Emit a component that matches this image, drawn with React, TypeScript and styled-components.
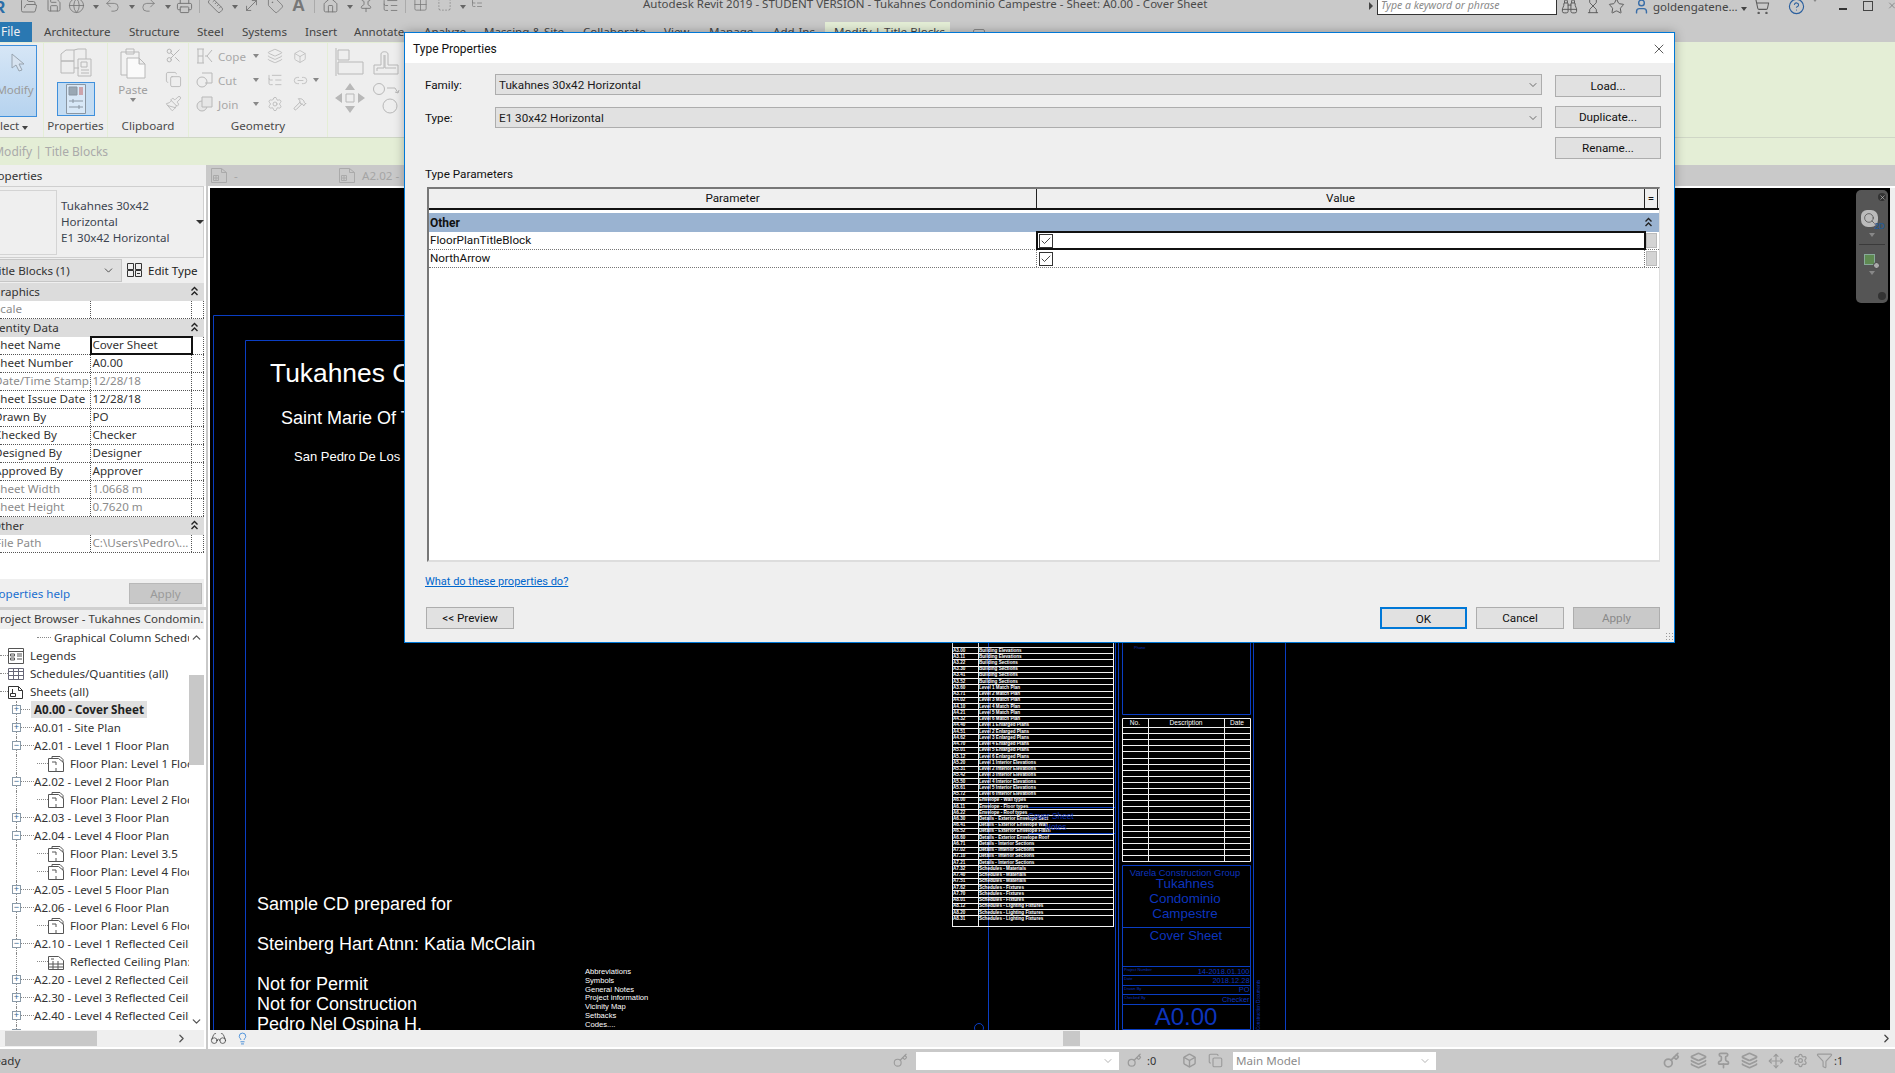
import React from "react";
import styled, { createGlobalStyle } from "styled-components";
import {
  FolderOpen, Save, Globe, Undo2, Redo2, Printer, Ruler, MoveDiagonal, Tag, House, Pin, ListTree,
  Binoculars, Hourglass, Star, User, ShoppingCart, CircleHelp, X, Check, ChevronDown, ChevronUp,
  ChevronLeft, ChevronRight, Grid2x2, SquareDashed, Filter, Lightbulb, Glasses, Scissors, Copy,
  Paintbrush, Hammer, Key, Layers, Link2, Box, Settings, Move, Search,
} from "lucide-react";

const UI = '"Noto Sans", "Liberation Sans", sans-serif';
const DLG = 'Roboto, "Liberation Sans", sans-serif';

const Global = createGlobalStyle`
  html, body { margin: 0; padding: 0; background: #c9c9c9; }
  * { box-sizing: border-box; }
`;

const Page = styled.div`
  position: relative; width: 1895px; height: 1073px; overflow: hidden;
  display: flex; flex-direction: column; font-family: ${UI}; font-size: 11.5px; color: #333; background: #c9c9c9;
`;

/* ---------- top bar ---------- */
const TopBar = styled.div`
  height: 21px; flex: none; display: flex; align-items: flex-start; overflow: hidden; background: #c9c9c9; color: #777;
`;
const Logo = styled.div`
  width: 20px; height: 14px; flex: none; margin-top: -2px; margin-left: -7px;
  font: bold 17px "Liberation Sans", sans-serif; color: #2b6ea8;
`;
const QuickSlot = styled.div<{ $w: number }>`
  width: ${(p) => p.$w}px; flex: none; height: 16px; margin-top: -3px; display: flex; justify-content: flex-start;
`;
const QuickCaret = styled.span`
  width: 0; height: 0; margin: 8px 0 0 0; border: 3.5px solid transparent; border-top: 4px solid #666; border-bottom: 0;
`;
const QuickSep = styled.span`
  width: 1px; height: 16px; background: #aaa; margin-left: 0;
`;
const BigA = styled.span`
  font: bold 18px "Liberation Sans", sans-serif; color: #777; line-height: 16px;
`;
const Title = styled.div`
  margin-left: 160px; margin-top: -4px; width: 726px; flex: none; white-space: nowrap; font-size: 11.5px; line-height: 16px; color: #4a4a4a;
`;
const SearchArrow = styled.span`
  width: 0; height: 0; flex: none; margin-top: 2px; border: 4px solid transparent; border-left: 4px solid #444; border-right: 0; margin-right: 4px;
`;
const SearchBox = styled.div`
  width: 180px; height: 15px; flex: none; background: #fff; border: 1px solid #333; border-top: 0; padding-left: 3px;
  font-style: italic; font-size: 10.5px; line-height: 11px; color: #8a8a8a;
`;
const TopIcons = styled.div`
  display: flex; align-items: flex-start; margin-left: 4px; color: #5a5a5a; height: 16px;
`;
const TopSlot = styled.div<{ $w: number }>`
  width: ${(p) => p.$w}px; flex: none; height: 16px; margin-top: -2px; display: flex; color: inherit;
`;
const UserName = styled.div`
  width: 100px; flex: none; font-size: 11.5px; line-height: 13px; color: #444; white-space: nowrap;
`;
const WinDash = styled.span`
  width: 8px; height: 2px; margin-top: 10px; background: #333;
`;
const WinRestore = styled.span`
  width: 10px; height: 10px; margin-top: 3px; border: 1.5px solid #444;
`;

/* ---------- tabs ---------- */
const TabRow = styled.div`
  height: 21px; flex: none; display: flex; align-items: stretch; background: #c9c9c9; padding-top: 1px;
`;
const FileTab = styled.div`
  width: 32px; margin-right: 12px; background: #2a78b2; color: #f2f2f2; font-size: 12px; line-height: 19px; padding-left: 1px;
`;
const Tab = styled.div<{ $w: number; $active?: boolean }>`
  width: ${(p) => p.$w}px; flex: none; white-space: nowrap; font-size: 11.6px; line-height: 19px; color: #444;
  background: ${(p) => (p.$active ? "#e4eed6" : "transparent")};
  padding-left: ${(p) => (p.$active ? "9px" : "0")};
`;
const TabGap = styled.div`
  width: 23px; flex: none;
`;
const TabButton = styled.div`
  width: 12px; height: 8px; margin-top: 7px; border: 1px solid #888; border-radius: 2px;
`;

/* ---------- ribbon ---------- */
const Ribbon = styled.div`
  height: 96px; flex: none; display: flex; background: #e4eed6; border-bottom: 1px solid #cfd6c6; padding-top: 1px;
`;
const RibbonPanel = styled.div<{ $w: number }>`
  width: ${(p) => p.$w}px; flex: none; margin-right: 1px; background: #eeeeee; display: flex; flex-direction: column; overflow: hidden;
`;
const PanelBody = styled.div`
  flex: 1; display: flex; min-height: 0;
`;
const PanelLabel = styled.div<{ $left?: boolean }>`
  height: 21px; flex: none; text-align: ${(p) => (p.$left ? "left" : "center")}; font-size: 11.6px; line-height: 20px; color: #4a4a4a; white-space: nowrap;
`;
const ModifyButton = styled.div`
  width: 38px; height: 72px; margin-top: 2px; margin-left: -1px; padding-top: 7px; background: linear-gradient(#d6e6f6, #b6d3ef); border: 1px solid #3f90dc;
  display: flex; flex-direction: column; align-items: center; color: #aab;
`;
const ModifyText = styled.span`
  font-size: 11.5px; line-height: 16px; color: #9a9a9a; margin-top: 9px; margin-left: -6px;
`;
const Stack = styled.div<{ $w?: number; $pt?: number }>`
  display: flex; flex-direction: column; align-items: center; width: ${(p) => (p.$w ? p.$w + "px" : "100%")}; padding-top: ${(p) => p.$pt ?? 0}px; color: #b5b5b5; flex: none;
`;
const PropButton = styled.div`
  width: 38px; height: 34px; margin-top: 4px; background: #c4dcf2; border: 1px solid #3f90dc; display: flex; align-items: center; justify-content: center;
`;
const PasteText = styled.span`
  font-size: 11.5px; line-height: 16px; color: #a0a0a0; margin-top: 3px;
`;
const MiniCaret = styled.span<{ $dark?: boolean }>`
  display: inline-block; width: 0; height: 0; border: 3px solid transparent; border-top: 4px solid ${(p) => (p.$dark ? "#444" : "#888")}; border-bottom: 0; flex: none;
`;
const ToolRow = styled.div`
  display: flex; align-items: center; height: 24px; color: #b5b5b5; font-size: 12px;
`;
const ToolName = styled.span`
  color: #a8a8a8; width: 35px; margin-left: 5px; font-size: 11.6px;
`;
const ToolColumn = styled.div<{ $ml: number; $w?: number; $pt?: number; $gap?: number }>`
  margin-left: ${(p) => p.$ml}px; ${(p) => (p.$w ? `width:${p.$w}px;` : "")} padding-top: ${(p) => p.$pt ?? 1}px; flex: none;
  display: flex; flex-direction: column; gap: ${(p) => p.$gap ?? 0}px;
`;
const IconCell = styled.span<{ $w: number }>`
  width: ${(p) => p.$w}px; flex: none; display: flex; align-items: center;
`;
const ContextBar = styled.div`
  height: 27px; flex: none; background: #e4eed6; padding-left: 0; font-size: 12px; line-height: 27px; color: #aaa; white-space: nowrap; overflow: hidden;
`;
const ContextText = styled.span`
  margin-left: -13px; display: inline-block;
`;

/* ---------- workspace ---------- */
const Workspace = styled.div`
  flex: 1; display: flex; min-height: 0;
`;
const Side = styled.div`
  width: 206px; flex: none; display: flex; flex-direction: column; background: #fff; overflow: hidden;
`;
const PanelHead = styled.div`
  height: 21px; flex: none; background: #efefef; font-size: 11.6px; line-height: 22px; white-space: nowrap; overflow: hidden;
`;
const Shift = styled.span<{ $x: number }>`
  display: inline-block; margin-left: -${(p) => p.$x}px; white-space: nowrap;
`;
const TypeSelector = styled.div`
  height: 72px; flex: none; width: 204px; background: #efefef; border: 1px solid #cfcfcf; border-left: 0; display: flex; align-items: center; position: relative;
`;
const Thumb = styled.div`
  width: 57px; height: 65px; flex: none; border: 1px solid #d4d4d4; border-left: 0;
`;
const TypeText = styled.div`
  margin-left: 4px; font-size: 11.6px; line-height: 16px; color: #3c4450; white-space: nowrap;
`;
const TypeArrow = styled.span`
  margin-left: 27px; width: 0; height: 0; border: 4px solid transparent; border-top: 4px solid #333; border-bottom: 0;
`;
const FilterRow = styled.div`
  height: 25px; flex: none; background: #efefef; display: flex; align-items: stretch; padding-top: 1px; padding-bottom: 1px; width: 204px;
`;
const FilterSelect = styled.div`
  width: 122px; flex: none; background: #dfdfdf; border: 1px solid #c6c6c6; border-left: 0; display: flex; align-items: center; font-size: 11.6px; white-space: nowrap; overflow: hidden; justify-content: space-between; padding-right: 6px; padding-bottom: 1px;
`;
const EditType = styled.div`
  display: flex; align-items: center; margin-left: 5px; gap: 5px; font-size: 11.6px; color: #222; white-space: nowrap; padding-bottom: 1px;
`;
const SectionHead = styled.div`
  height: 18px; flex: none; width: 204px; background: #dcdcdc; display: flex; align-items: center; justify-content: space-between; padding: 0 5px 2px 0; font-size: 11.6px; color: #333; white-space: nowrap; overflow: hidden;
`;
const PropGrid = styled.div`
  display: grid; grid-template-columns: 90.5px 101px 12px; height: 18px; flex: none; width: 204px; border-bottom: 1px dotted #555; font-size: 11.6px; line-height: 15px;
`;
const PropLabel = styled.div<{ $muted?: boolean }>`
  overflow: hidden; white-space: nowrap; color: ${(p) => (p.$muted ? "#8b8b8b" : "#333")}; border-right: 1px dotted #555;
`;
const PropValue = styled.div<{ $muted?: boolean; $sel?: boolean }>`
  overflow: hidden; white-space: nowrap; padding-left: 2px; color: ${(p) => (p.$muted ? "#8b8b8b" : "#333")}; border-right: 1px dotted #555;
  ${(p) => p.$sel && "outline: 2px solid #111; outline-offset: -1px;"}
`;
const PropEnd = styled.div`
  border-right: 1px dotted #555;
`;
const PropFill = styled.div`
  height: 26px; flex: none;
`;
const HelpRow = styled.div`
  height: 28px; flex: none; background: #efefef; width: 204px; display: flex; justify-content: space-between; align-items: center; padding-right: 2px; overflow: hidden;
`;
const HelpLink = styled.a`
  color: #1a6fd0; text-decoration: underline; font-size: 11.6px; white-space: nowrap;
`;
const DisabledBtn = styled.div`
  width: 73px; height: 21px; background: #c8c8c8; border: 1px solid #b8b8b8; text-align: center; font-size: 11.6px; line-height: 20px; color: #9a9a9a;
`;
const PanelDivider = styled.div`
  height: 3px; flex: none; background: #cfcfcf;
`;
const BrowserHead = styled.div`
  height: 19px; flex: none; background: #efefef; font-size: 11.6px; line-height: 18px; color: #3c3c3c; white-space: nowrap; overflow: hidden; width: 204px;
`;
const TreeArea = styled.div`
  height: 401px; flex: none; display: flex; width: 204px; overflow: hidden;
`;
const Tree = styled.div`
  width: 189px; flex: none; overflow: hidden;
`;
const TreeRow = styled.div<{ $indent: number; $guide?: boolean }>`
  position: relative; height: 18px; display: flex; align-items: center; padding-left: ${(p) => p.$indent}px; padding-bottom: 1px; white-space: nowrap; font-size: 11.6px; color: #333;
  ${(p) => p.$guide && "&::before { content: ''; position: absolute; left: 16px; top: 0; bottom: 0; border-left: 1px dotted #888; }"}
`;
const Expander = styled.span`
  position: relative; z-index: 1; width: 9px; height: 9px; flex: none; background: #fff; border: 1px solid #8a9aa8; display: flex; align-items: center; justify-content: center; font: 9px/7px "Liberation Sans", sans-serif; color: #35678f;
`;
const Dots = styled.span<{ $w: number }>`
  width: ${(p) => p.$w}px; flex: none; border-top: 1px dotted #888; height: 0;
`;
const RowLabel = styled.span<{ $sel?: boolean }>`
  ${(p) => p.$sel && "font-weight: 700; background: #e0e0e0; padding: 1px 3px; margin-left: -3px; color: #222;"}
  flex: none;
`;
const TreeIcon = styled.svg`
  flex: none; margin-right: 6px;
`;
const VScroll = styled.div`
  width: 15px; flex: none; display: flex; flex-direction: column; align-items: center; justify-content: space-between; position: relative; color: #555; padding: 2px 0;
`;
const VThumb = styled.div`
  position: absolute; left: 0; right: 0; top: 46px; height: 90px; background: #c8c8c8;
`;
const HScroll = styled.div`
  height: 17px; flex: none; width: 204px; background: #efefef; display: flex; align-items: center; justify-content: space-between; padding: 0 16px 0 5px; color: #555;
`;
const HThumb = styled.div`
  width: 92px; height: 15px; background: #c8c8c8;
`;

/* ---------- main view ---------- */
const Main = styled.div`
  flex: 1; display: flex; flex-direction: column; min-width: 0; position: relative; padding-left: 2px;
`;
const DocTabs = styled.div`
  height: 21px; flex: none; display: flex; align-items: center; padding-left: 5px; color: #aaa; margin-left: -2px; background: #c9c9c9;
`;
const DocTab = styled.div<{ $w: number }>`
  width: ${(p) => p.$w}px; display: flex; align-items: center; gap: 7px; flex: none; font-size: 11.6px; color: #a5a5a5;
`;
const ViewOuter = styled.div`
  flex: 1; min-height: 0; background: #fff; padding: 2px 0 2px 2px; display: flex; flex-direction: column;
`;
const ViewRow = styled.div`
  height: 842px; flex: none; display: flex; background: #efefef;
`;
const Canvas = styled.svg`
  display: block; width: 1680px; height: 842px; flex: none; background: #000;
`;
const NavWheelBar = styled.div`
  position: absolute; left: 1650px; top: 25px; width: 32px; height: 113px; background: #555; border-radius: 5px; display: flex; flex-direction: column; align-items: center;
`;
const NavClose = styled.span`
  align-self: flex-end; margin: 3px 2px 0 0; width: 8px; height: 8px; border-radius: 50%; background: #333; color: #ccc; display: flex; align-items: center; justify-content: center;
`;
const NavWheel = styled.div`
  position: relative; margin: 9px 5px 0 0; width: 17px; height: 17px; border-radius: 6px 7px 7px 7px; background: #bbb; display: flex; align-items: center; justify-content: center; color: #444;
`;
const Nav2D = styled.span`
  position: absolute; right: -7px; bottom: -4px; font: bold 8.5px "Liberation Sans", sans-serif; color: #2a5a8e;
`;
const NavSep = styled.div`
  width: 26px; height: 1px; background: #3a3a3a; margin-top: 2px;
`;
const NavCaretBox = styled.div`
  height: 15px; display: flex; align-items: center;
`;
const NavSquare = styled.div`
  position: relative; margin: 9px 5px 0 0; width: 11px; height: 11px; background: #5f8a52; border: 1px solid #8a9;
`;
const NavLens = styled.span`
  position: absolute; right: -6px; bottom: -5px; width: 7px; height: 7px; border-radius: 50%; background: #aaa; border: 1px solid #444;
`;
const NavMenu = styled.div`
  margin-top: auto; margin-bottom: 3px; align-self: flex-end; margin-right: 2px; width: 8px; height: 8px; border-radius: 50%; background: #333;
`;
const ViewBar = styled.div`
  height: 17px; flex: none; background: #efefef; display: flex; align-items: center; color: #445;
`;
const ViewIcon = styled.span<{ $w: number; $c?: string }>`
  width: ${(p) => p.$w}px; flex: none; display: flex; align-items: center; color: ${(p) => p.$c || "#444"};
`;
const ViewThumb = styled.div`
  width: 17px; height: 15px; background: #c8c8c8; margin-left: 809px; flex: none;
`;
const ViewEnd = styled.span`
  margin-left: auto; margin-right: 2px; display: flex; color: #444;
`;

/* ---------- status bar ---------- */
const Status = styled.div`
  height: 24px; flex: none; display: flex; align-items: center; background: #c9c9c9; color: #9b9b9b; padding-bottom: 1px;
`;
const Ready = styled.div`
  width: 893px; flex: none; font-size: 11.6px; color: #333; white-space: nowrap;
`;
const StatusSelect = styled.div<{ $w: number }>`
  width: ${(p) => p.$w}px; height: 18px; flex: none; background: #fff; display: flex; align-items: center; justify-content: space-between; padding: 0 5px 0 3px; font-size: 11.6px; color: #8b8b8b; white-space: nowrap;
`;
const StatusSlot = styled.span<{ $w: number }>`
  width: ${(p) => p.$w}px; flex: none; display: flex; align-items: center; color: #9b9b9b; font-size: 11px;
`;
const StatusText = styled.span`
  color: #333; font-size: 11px;
`;

/* ---------- dialog ---------- */
const Dialog = styled.div`
  position: absolute; left: 404px; top: 32px; width: 1271px; height: 611px; background: #efefef; border: 1px solid #0078d7; box-shadow: 0 0 10px rgba(0,0,0,.28);
  display: flex; flex-direction: column; color: #111; font-family: ${DLG}; font-size: 11.7px;
`;
const DialogTitle = styled.div`
  height: 30px; flex: none; background: #fff; display: flex; align-items: center; justify-content: space-between; padding: 1px 7px 0 8px; font-size: 12px; color: #111;
`;
const DialogBody = styled.div`
  flex: 1; display: flex; flex-direction: column; padding: 11px 14px 0 22px;
`;
const FormTop = styled.div`
  height: 95px; flex: none; display: flex;
`;
const FormCol = styled.div`
  width: 1117px; flex: none; display: flex; flex-direction: column; gap: 12px; margin-left: -2px;
`;
const FormRow = styled.div`
  display: flex; align-items: center; height: 21px;
`;
const FormLabel = styled.div`
  width: 70px; flex: none; padding-left: 0;
`;
const ComboBox = styled.div`
  flex: 1; height: 21px; background: #e1e1e1; border: 1px solid #adadad; border-width: 1px 1.5px 1.5px 1px; display: flex; align-items: center; justify-content: space-between; padding: 0 2px 0 3px; color: #1b1b1b;
`;
const ButtonCol = styled.div`
  width: 106px; flex: none; margin-left: 13px; margin-top: 1px; display: flex; flex-direction: column; gap: 9px;
`;
const DlgButton = styled.div<{ $kind?: "ok" | "off"; $w?: number }>`
  height: 22px; flex: none; width: ${(p) => (p.$w ? p.$w + "px" : "100%")}; text-align: center; line-height: 20px;
  background: ${(p) => (p.$kind === "off" ? "#c9c9c9" : "#e1e1e1")};
  border: ${(p) => (p.$kind === "ok" ? "2px solid #0078d7" : "1px solid #adadad")};
  color: ${(p) => (p.$kind === "off" ? "#8a8a8a" : "#111")};
`;
const SectionLabel = styled.div`
  margin-top: -2px; height: 15px; line-height: 14px; margin-left: -2px;
`;
const Grid = styled.div`
  margin-top: 5px; margin-left: 0; width: 1233px; height: 375px; flex: none; background: #fff; border-top: 2px solid #777; border-left: 2px solid #777; border-right: 1px solid #ddd; border-bottom: 2px solid #ddd; display: flex; flex-direction: column;
`;
const GridHead = styled.div`
  height: 21px; flex: none; display: grid; grid-template-columns: 608px 608px 13px; background: #efefef; border-bottom: 2px solid #111; text-align: center; line-height: 18px;
`;
const HeadCell = styled.div`
  border-right: 1px solid #222;
`;
const GridGap = styled.div`
  height: 3px; flex: none; background: #fff;
`;
const GroupRow = styled.div`
  height: 19px; flex: none; width: 1230px; background: #9ab3d1; display: flex; align-items: center; justify-content: space-between; padding: 0 6px 0 1px; font-weight: 700; font-size: 12px; color: #111;
`;
const DataRow = styled.div`
  height: 18px; flex: none; display: grid; grid-template-columns: 608px 608px 13px; width: 1230px; border-bottom: 1px dotted #777;
`;
const DataName = styled.div`
  padding-left: 1px; line-height: 16px; border-right: 1px dotted #777;
`;
const DataValue = styled.div<{ $sel?: boolean }>`
  ${(p) => (p.$sel ? "outline: 2px solid #111; outline-offset: -1px;" : "border-right: 1px dotted #777;")}
  padding: 2px 0 0 2px; display: flex;
`;
const CheckBox = styled.span`
  width: 14px; height: 14px; border: 1.5px solid #333; background: #fff; display: flex; align-items: center; justify-content: center; color: #333;
`;
const Grip = styled.div`
  margin: 1px; background: #d4d4d4; border: 1px solid #bbb;
`;
const HelpAnchor = styled.a`
  margin-top: 13px; height: 14px; line-height: 14px; margin-left: -2px; color: #0066cc; text-decoration: underline; font-size: 11px; align-self: flex-start;
`;
const Footer = styled.div`
  margin-top: 18px; margin-left: -1px; display: flex; align-items: center; width: 1235px;
`;
const FooterRight = styled.div`
  margin-left: auto; display: flex; gap: 9px; margin-right: 1px;
`;
const ResizeGrip = styled.span`
  position: absolute; right: 1px; bottom: 1px; width: 8px; height: 9px; background-image: radial-gradient(#999 1px, transparent 1px); background-size: 3px 3px;
`;

/* ---------- small drawings ---------- */
const Sheet = ({ s = 16 }: { s?: number }) => (
  <TreeIcon width={s} height={s} viewBox="0 0 16 16" fill="none" stroke="currentColor">
    <path d="M.5 2.5h10l4 4v8H.5zM10.5 2.5v4h4M2.5 9.5h5v3h-5zM4.5 5v4.5" />
  </TreeIcon>
);
const Plan = () => (
  <TreeIcon width={16} height={16} viewBox="0 0 16 16" fill="none" stroke="#555">
    <path d="M.5 2.5h10l5 4v9H.5zM4 2.5v-2h8l3 3v3M4 6h4v3M8 12v3" />
  </TreeIcon>
);
const Rcp = () => (
  <TreeIcon width={16} height={16} viewBox="0 0 16 16" fill="none" stroke="#555">
    <path d="M.5 2.5h10l5 4v9H.5zM5 7v8M10 7v8M.5 10h15M.5 13h15M3 5h3" />
  </TreeIcon>
);
const Legend = () => (
  <TreeIcon width={16} height={16} viewBox="0 0 16 16" fill="none" stroke="#555">
    <path d="M.5.5h15v15H.5zM.5 3.5h15M2.5 6h4v2h-4zM2.5 10h4v2h-4zM9 6h5M9 8h5M9 11h5" />
  </TreeIcon>
);
const Sched = () => (
  <TreeIcon width={16} height={16} viewBox="0 0 16 16" fill="none" stroke="#667">
    <path d="M.5 2.5h15v11H.5zM.5 5.5h15M.5 9.5h15M5.5 2.5v11M10.5 2.5v11" />
  </TreeIcon>
);
const Collapse = () => (
  <svg width="9" height="11" viewBox="0 0 9 11" fill="none" stroke="#222" strokeWidth="1.4">
    <path d="M1.5 4.5 4.5 1.5l3 3M1.5 9 4.5 6l3 3" />
  </svg>
);
const SheetIconRaw = ({ c = "#aaa" }: { c?: string }) => (
  <svg width="16" height="15" viewBox="0 0 16 15" fill="none" stroke={c}>
    <path d="M.5.5h10l5 4v10H.5zM10.5.5v4h5M2.5 7.5h5v5h-5zM5 7.5v5M2.5 10h5" />
  </svg>
);
const G = "#b8b8b8";
const CursorArrow = () => (
  <svg width="14" height="20" viewBox="0 0 14 20" fill="#d7e3f0" stroke="#98a4b0">
    <path d="M1 1v14l4-3 3 6 3-1-3-6h5z" />
  </svg>
);
const FamilyIcon = () => (
  <svg width="32" height="30" viewBox="0 0 32 30" fill="none" stroke={G}>
    <path d="M1 6l5-4h8v11H1zM14 2l4-1h8v10M1 13h13v12H1zM14 20h5M18 11h13v17H18zM21 14h6v5h-6zM21 22h8M21 25h8" />
  </svg>
);
const PropsIcon = () => (
  <svg width="20" height="30" viewBox="0 0 20 30" fill="#d8e8f7" stroke="#8a96a2">
    <path d="M.5.5h19v29H.5z" />
    <path d="M3 3h8v8H3z" fill="#9aa8b4" />
    <path d="M13 3h4v8h-4z" fill="#c06060" stroke="none" opacity=".5" />
    <path d="M3 17h14M3 23h14M7 15v4M13 21v4" fill="none" />
  </svg>
);
const PasteIcon = () => (
  <svg width="26" height="31" viewBox="0 0 26 31" fill="#f2f2f2" stroke={G}>
    <path d="M1 4h18v23H1zM6 1h8v5H6z" />
    <path d="M7 10h12l6 6v14H7zM19 10v6h6" fill="#fafafa" />
  </svg>
);
const Cope = () => (
  <svg width="17" height="16" viewBox="0 0 17 16" fill="none" stroke={G}>
    <path d="M2 1v14M7 1v14M2 8h5M1 1h7M1 15h7M16 2l-5 6 5 6M11 8h-2" />
  </svg>
);
const CutGeom = () => (
  <svg width="17" height="16" viewBox="0 0 17 16" fill="none" stroke={G}>
    <path d="M6 1h10v10H9" />
    <circle cx="6" cy="10" r="5" />
  </svg>
);
const JoinGeom = () => (
  <svg width="17" height="16" viewBox="0 0 17 16" fill="#e6e6e6" stroke={G}>
    <circle cx="6" cy="10" r="5" />
    <path d="M6 1h10v10H6z" />
  </svg>
);
const AlignIcon = () => (
  <svg width="30" height="30" viewBox="0 0 30 30" fill="none" stroke={G}>
    <path d="M1 0v28M3 2h11v10H3zM3 14h25v12H3z" />
  </svg>
);
const OffsetIcon = () => (
  <svg width="26" height="26" viewBox="0 0 26 26" fill="none" stroke={G}>
    <path d="M1 24V15h7V4c0-3 7-3 7 0v11h10v9zM4 21v-3h7V5M12 5v13h11" />
  </svg>
);
const MoveIcon = () => (
  <svg width="30" height="30" viewBox="0 0 30 30" fill={G}>
    <path d="M15 0l5 7h-10zM15 30l5-7h-10zM0 15l7-5v10zM30 15l-7-5v10z" />
    <path d="M11 11h8v8h-8z" fill="none" stroke={G} />
  </svg>
);
const RotateIcon = () => (
  <svg width="28" height="34" viewBox="0 0 28 34" fill="none" stroke={G}>
    <circle cx="6" cy="6" r="5.5" />
    <circle cx="17" cy="23" r="7" />
    <path d="M14 5h8l3 5M25 10l-3-1M25 10l1-3" />
  </svg>
);

const QUICK: [React.ReactNode, number][] = [
  [<FolderOpen size={18} strokeWidth={1.3} />, 26],
  [<Save size={16} strokeWidth={1.4} />, 22],
  [<Globe size={17} strokeWidth={1.2} />, 25],
  [<QuickCaret />, 11],
  [<Undo2 size={17} strokeWidth={1.1} />, 25],
  [<QuickCaret />, 11],
  [<Redo2 size={17} strokeWidth={1.1} />, 25],
  [<QuickCaret />, 11],
  [<Printer size={17} strokeWidth={1.4} />, 23],
  [<QuickSep />, 8],
  [<Ruler size={17} strokeWidth={1.3} />, 25],
  [<QuickCaret />, 11],
  [<MoveDiagonal size={17} strokeWidth={1.3} />, 24],
  [<Tag size={17} strokeWidth={1.2} />, 25],
  [<BigA>A</BigA>, 22],
  [<QuickSep />, 8],
  [<House size={17} strokeWidth={1.3} />, 25],
  [<QuickCaret />, 11],
  [<Pin size={16} strokeWidth={1.4} />, 24],
  [<ListTree size={17} strokeWidth={1.2} />, 23],
  [<QuickSep />, 8],
  [<Grid2x2 size={15} strokeWidth={1.2} />, 24],
  [<SquareDashed size={15} strokeWidth={1.2} />, 23],
  [<QuickCaret />, 11],
  [<ListTree size={12} strokeWidth={1.4} />, 12],
];

const TABS: [string, number][] = [
  ["Architecture", 85], ["Structure", 68], ["Steel", 45], ["Systems", 63], ["Insert", 49], ["Annotate", 70],
  ["Analyze", 60], ["Massing & Site", 99], ["Collaborate", 81], ["View", 45], ["Manage", 64], ["Add-Ins", 52],
];

type PropT = { l: string; v: string; m?: boolean; s?: boolean };
const IDENTITY: PropT[] = [
  { l: "Sheet Name", v: "Cover Sheet", s: true },
  { l: "Sheet Number", v: "A0.00" },
  { l: "Date/Time Stamp", v: "12/28/18", m: true },
  { l: "Sheet Issue Date", v: "12/28/18" },
  { l: "Drawn By", v: "PO" },
  { l: "Checked By", v: "Checker" },
  { l: "Designed By", v: "Designer" },
  { l: "Approved By", v: "Approver" },
  { l: "Sheet Width", v: "1.0668 m", m: true },
  { l: "Sheet Height", v: "0.7620 m", m: true },
];

type TreeT = { k: "s" | "c" | "p"; open?: boolean; t: string; b?: boolean; i?: "plan" | "rcp" };
const SHEETS: TreeT[] = [
  { k: "s", t: "A0.00 - Cover Sheet", b: true },
  { k: "s", t: "A0.01 - Site Plan" },
  { k: "s", open: true, t: "A2.01 - Level 1 Floor Plan" },
  { k: "c", t: "Floor Plan: Level 1 Floor Plan" },
  { k: "s", open: true, t: "A2.02 - Level 2 Floor Plan" },
  { k: "c", t: "Floor Plan: Level 2 Floor Plan" },
  { k: "s", t: "A2.03 - Level 3 Floor Plan" },
  { k: "s", open: true, t: "A2.04 - Level 4 Floor Plan" },
  { k: "c", t: "Floor Plan: Level 3.5" },
  { k: "c", t: "Floor Plan: Level 4 Floor Plan" },
  { k: "s", t: "A2.05 - Level 5 Floor Plan" },
  { k: "s", open: true, t: "A2.06 - Level 6 Floor Plan" },
  { k: "c", t: "Floor Plan: Level 6 Floor Plan" },
  { k: "s", open: true, t: "A2.10 - Level 1 Reflected Ceiling Plan" },
  { k: "c", i: "rcp", t: "Reflected Ceiling Plan: Level 1" },
  { k: "s", t: "A2.20 - Level 2 Reflected Ceiling Plan" },
  { k: "s", t: "A2.30 - Level 3 Reflected Ceiling Plan" },
  { k: "s", t: "A2.40 - Level 4 Reflected Ceiling Plan" },
  { k: "s", t: "A2.50 - Level 5 Reflected Ceiling Plan" },
];

/* sheet index on the drawing */
const LIST: string[] = [
  ...["Building Elevations", "Building Elevations"],
  ...["Building Sections", "Building Sections", "Building Sections", "Building Sections"],
  ...[1, 2, 3, 4, 5, 6].map((n) => `Level ${n} Match Plan`),
  ...[1, 2, 3, 4, 5, 6].map((n) => `Level ${n} Enlarged Plans`),
  ...[1, 2, 3, 4, 5, 6].map((n) => `Level ${n} Interior Elevations`),
  "Envelope - Wall types", "Envelope - Floor types", "Envelope - Roof types",
  "Details - Exterior Envelope Sect", "Details - Exterior Envelope Wall", "Details - Exterior Envelope Flash", "Details - Exterior Envelope Roof",
  "Details - Interior Sections", "Details - Interior Sections", "Details - Interior Sections", "Details - Interior Sections",
  "Schedules - Materials", "Schedules - Materials", "Schedules - Materials",
  "Schedules - Fixtures", "Schedules - Fixtures", "Schedules - Fixtures",
  "Schedules - Lighting Fixtures", "Schedules - Lighting Fixtures", "Schedules - Lighting Fixtures",
];
const BL = "#0a3ec4";
const BT = "#0d34bc";
const ARIAL = '"Liberation Sans", sans-serif';

const Drawing = () => (
  <Canvas viewBox="210 188 1680 842" fontFamily={ARIAL}>
    <g fill="none" stroke={BL} strokeWidth="1">
      <path d="M213.5 1030V315.5H1300M245.5 1030V340.5H1300" />
      <path d="M988.5 640V1030M1028 807.5H1116M1028 833.5H1116" />
      <path d="M1115.5 640V1030M1118.5 640V1030M1253.5 640V1030M1285.5 640V1030" />
      <path d="M1122.5 640V714.5H1250.5V640" />
      <path d="M1122.5 865.5H1250.5V1029.5H1122.5zM1122.5 927.5H1250.5M1122.5 966.5H1250.5M1122.5 975.5H1250.5M1122.5 985.5H1250.5M1122.5 994.5H1250.5M1122.5 1004.5H1250.5" />
      <circle cx="979" cy="1028" r="4.5" />
    </g>
    {/* sheet index */}
    <g fill="none" stroke="#f2f2f2" strokeWidth="1">
      <path d="M952.5 640V926.5M978.5 640V926.5M1113.5 640V926.5" />
      {LIST.map((_, i) => <path key={i} d={`M952 ${Math.round(647 + i * 6.24) + 0.5}H1114`} />)}
      <path d="M952 926.5H1114" />
    </g>
    <g fill="#fff" fontSize="4.6" fontWeight="700">
      {LIST.map((t, i) => (
        <React.Fragment key={i}>
          <text x="953" y={651.5 + (i - 0) * 6.24}>{`A${Math.floor(i / 8) + 3}.${i % 8}${i % 3}`}</text>
          <text x="979" y={651.5 + i * 6.24}>{t}</text>
        </React.Fragment>
      ))}
    </g>
    {/* revision table */}
    <g fill="none" stroke="#f2f2f2" strokeWidth="1">
      <path d="M1122.5 718.5H1250.5V861.5H1122.5zM1148.5 718.5V861.5M1224.5 718.5V861.5" />
      {Array.from({ length: 22 }, (_, i) => <path key={i} d={`M1122 ${Math.round(727 + i * 6.1) + 0.5}H1251`} />)}
    </g>
    <g fill="#fff" fontSize="6.6" textAnchor="middle">
      <text x="1135" y="724.5">No.</text>
      <text x="1186" y="724.5">Description</text>
      <text x="1237" y="724.5">Date</text>
    </g>
    {/* white notes */}
    <g fill="#fff">
      <text x="270" y="382" fontSize="26.4">Tukahnes Condominio</text>
      <text x="281" y="424" fontSize="18">Saint Marie Of The Woods</text>
      <text x="294" y="460.5" fontSize="13">San Pedro De Los Milagros</text>
      <text x="257" y="910" fontSize="18">Sample CD prepared for</text>
      <text x="257" y="950" fontSize="18">Steinberg Hart Atnn: Katia McClain</text>
      <text x="257" y="990" fontSize="18">Not for Permit</text>
      <text x="257" y="1010" fontSize="18">Not for Construction</text>
      <text x="257" y="1030" fontSize="18">Pedro Nel Ospina H.</text>
      <g fontSize="7.6">
        <text x="585" y="974">Abbreviations</text>
        <text x="585" y="983">Symbols</text>
        <text x="585" y="991.5">General Notes</text>
        <text x="585" y="1000">Project information</text>
        <text x="585" y="1009">Vicinity Map</text>
        <text x="585" y="1018">Setbacks</text>
        <text x="585" y="1026.5">Codes....</text>
      </g>
    </g>
    {/* blue title block */}
    <g fill={BT}>
      <text x="1028" y="819" fontSize="8.2">Cover Sheet</text>
      <text x="1045" y="830" fontSize="8.2">Notes</text>
      <text x="1134" y="649" fontSize="4">Phone</text>
      <g textAnchor="middle">
        <text x="1185" y="875.5" fontSize="9.4">Varela Construction Group</text>
        <text x="1185" y="888" fontSize="13.4">Tukahnes</text>
        <text x="1185" y="903" fontSize="13.4">Condominio</text>
        <text x="1185" y="918" fontSize="13.4">Campestre</text>
        <text x="1186" y="940" fontSize="13">Cover Sheet</text>
        <text x="1186" y="1025" fontSize="24">A0.00</text>
      </g>
      <g fontSize="4">
        <text x="1124" y="971">Project Number</text>
        <text x="1124" y="980">Date</text>
        <text x="1124" y="990">Drawn By</text>
        <text x="1124" y="999">Checked By</text>
      </g>
      <g fontSize="7.4" textAnchor="end">
        <text x="1249.5" y="973.5">14-2018.01.100</text>
        <text x="1249.5" y="983">2018.12.28</text>
        <text x="1249.5" y="992">PO</text>
        <text x="1249.5" y="1002">Checker</text>
      </g>
      <text transform="translate(1260 1030) rotate(-90)" fontSize="4.6">Construction Documents</text>
    </g>
  </Canvas>
);

export default function App() {
  return (
    <Page>
      <Global />
      <TopBar>
        <Logo>R</Logo>
        <QuickSlot $w={7} />
        {QUICK.map(([n, w], i) => <QuickSlot key={i} $w={w}>{n}</QuickSlot>)}
        <Title>Autodesk Revit 2019 - STUDENT VERSION - Tukahnes Condominio Campestre - Sheet: A0.00 - Cover Sheet</Title>
        <SearchArrow />
        <SearchBox>Type a keyword or phrase</SearchBox>
        <TopIcons>
          <TopSlot $w={24}><Binoculars size={17} strokeWidth={1.4} /></TopSlot>
          <TopSlot $w={23}><Hourglass size={16} strokeWidth={1.4} /></TopSlot>
          <TopSlot $w={25}><Star size={17} strokeWidth={1.4} /></TopSlot>
          <TopSlot $w={20}><User size={17} strokeWidth={2} color="#3a6ea8" /></TopSlot>
          <UserName>goldengatene...&nbsp;<MiniCaret $dark /></UserName>
          <TopSlot $w={35}><ShoppingCart size={17} strokeWidth={1.5} /></TopSlot>
          <TopSlot $w={24}><CircleHelp size={17} strokeWidth={1.6} color="#2a5f9e" /></TopSlot>
          <TopSlot $w={27}><MiniCaret /></TopSlot>
          <TopSlot $w={24}><WinDash /></TopSlot>
          <TopSlot $w={24}><WinRestore /></TopSlot>
          <TopSlot $w={10}><X size={15} strokeWidth={1.3} /></TopSlot>
        </TopIcons>
      </TopBar>

      <TabRow>
        <FileTab>File</FileTab>
        {TABS.map(([t, w]) => <Tab key={t} $w={w}>{t}</Tab>)}
        <Tab $w={125} $active>Modify | Title Blocks</Tab>
        <TabGap />
        <TabButton />
      </TabRow>

      <Ribbon>
        <RibbonPanel $w={43}>
          <PanelBody>
            <ModifyButton>
              <CursorArrow />
              <ModifyText>Modify</ModifyText>
            </ModifyButton>
          </PanelBody>
          <PanelLabel $left><Shift $x={13}>Select <MiniCaret $dark /></Shift></PanelLabel>
        </RibbonPanel>
        <RibbonPanel $w={63}>
          <PanelBody>
            <Stack $pt={5}>
              <FamilyIcon />
              <PropButton><PropsIcon /></PropButton>
            </Stack>
          </PanelBody>
          <PanelLabel>Properties</PanelLabel>
        </RibbonPanel>
        <RibbonPanel $w={80}>
          <PanelBody>
            <Stack $w={50} $pt={5}>
              <PasteIcon />
              <PasteText>Paste</PasteText>
              <MiniCaret />
            </Stack>
            <Stack $w={30}>
              <ToolRow><Scissors size={17} strokeWidth={1.4} /></ToolRow>
              <ToolRow><Copy size={17} strokeWidth={1.2} /></ToolRow>
              <ToolRow><Paintbrush size={17} strokeWidth={1.2} /></ToolRow>
            </Stack>
          </PanelBody>
          <PanelLabel>Clipboard</PanelLabel>
        </RibbonPanel>
        <RibbonPanel $w={138}>
          <PanelBody>
            <ToolColumn $ml={7} $w={68}>
              <ToolRow><Cope /><ToolName>Cope</ToolName><MiniCaret /></ToolRow>
              <ToolRow><CutGeom /><ToolName>Cut</ToolName><MiniCaret /></ToolRow>
              <ToolRow><JoinGeom /><ToolName>Join</ToolName><MiniCaret /></ToolRow>
            </ToolColumn>
            <ToolColumn $ml={3}>
              <ToolRow><IconCell $w={26}><Layers size={16} strokeWidth={1.2} /></IconCell><IconCell $w={14}><Box size={15} strokeWidth={1.2} /></IconCell></ToolRow>
              <ToolRow><IconCell $w={26}><ListTree size={16} strokeWidth={1.2} /></IconCell><IconCell $w={20}><Link2 size={15} strokeWidth={1.2} /></IconCell><MiniCaret /></ToolRow>
              <ToolRow><IconCell $w={26}><Settings size={16} strokeWidth={1.2} /></IconCell><IconCell $w={14}><Hammer size={16} strokeWidth={1.6} /></IconCell></ToolRow>
            </ToolColumn>
          </PanelBody>
          <PanelLabel>Geometry</PanelLabel>
        </RibbonPanel>
        <RibbonPanel $w={78}>
          <PanelBody>
            <ToolColumn $ml={7} $w={38} $pt={5} $gap={5}>
              <AlignIcon />
              <MoveIcon />
            </ToolColumn>
            <ToolColumn $ml={0} $pt={7} $gap={7}>
              <OffsetIcon />
              <RotateIcon />
            </ToolColumn>
          </PanelBody>
        </RibbonPanel>
      </Ribbon>
      <ContextBar><ContextText>&nbsp;&nbsp;Modify | Title Blocks</ContextText></ContextBar>

      <Workspace>
        <Side>
          <PanelHead><Shift $x={14}>Properties</Shift></PanelHead>
          <TypeSelector>
            <Thumb />
            <TypeText>Tukahnes 30x42<br />Horizontal<br />E1 30x42 Horizontal</TypeText>
            <TypeArrow />
          </TypeSelector>
          <FilterRow>
            <FilterSelect>
              <Shift $x={8}>Title Blocks (1)</Shift>
              <ChevronDown size={13} strokeWidth={1.5} />
            </FilterSelect>
            <EditType>
              <svg width="16" height="16" viewBox="0 0 16 16" fill="none" stroke="#333"><path d="M.5 1.5h6v6h-6zM8.5 1.5h6v6h-6zM.5 8.5h6v6h-6zM8.5 8.5h6v6h-6zM10 11.5h3" /></svg>
              Edit Type
            </EditType>
          </FilterRow>
          <SectionHead><Shift $x={8}>Graphics</Shift><Collapse /></SectionHead>
          <PropGrid><PropLabel $muted><Shift $x={6}>Scale</Shift></PropLabel><PropValue /><PropEnd /></PropGrid>
          <SectionHead><Shift $x={12}>Identity Data</Shift><Collapse /></SectionHead>
          {IDENTITY.map((r) => (
            <PropGrid key={r.l}>
              <PropLabel $muted={r.m}><Shift $x={6}>{r.l}</Shift></PropLabel>
              <PropValue $muted={r.m} $sel={r.s}>{r.v}</PropValue>
              <PropEnd />
            </PropGrid>
          ))}
          <SectionHead><Shift $x={8}>Other</Shift><Collapse /></SectionHead>
          <PropGrid>
            <PropLabel $muted><Shift $x={5}>File Path</Shift></PropLabel>
            <PropValue $muted>C:\Users\Pedro\...</PropValue>
            <PropEnd />
          </PropGrid>
          <PropFill />
          <HelpRow>
            <HelpLink><Shift $x={13}>Properties help</Shift></HelpLink>
            <DisabledBtn>Apply</DisabledBtn>
          </HelpRow>
          <PanelDivider />
          <BrowserHead><Shift $x={7}>Project Browser - Tukahnes Condomin...</Shift></BrowserHead>
          <TreeArea>
            <Tree>
              <TreeRow $indent={37}><Dots $w={14} /><RowLabel>&nbsp;Graphical Column Schedules</RowLabel></TreeRow>
              <TreeRow $indent={0}><Dots $w={8} /><Legend /><RowLabel>Legends</RowLabel></TreeRow>
              <TreeRow $indent={0}><Dots $w={8} /><Sched /><RowLabel>Schedules/Quantities (all)</RowLabel></TreeRow>
              <TreeRow $indent={0}><Dots $w={8} /><Sheet /><RowLabel>Sheets (all)</RowLabel></TreeRow>
              {SHEETS.map((n) =>
                n.k === "s" ? (
                  <TreeRow key={n.t} $indent={12} $guide>
                    <Expander>{n.open ? "−" : "+"}</Expander>
                    <Dots $w={13} />
                    <RowLabel $sel={n.b}>{n.t}</RowLabel>
                  </TreeRow>
                ) : (
                  <TreeRow key={n.t} $indent={37} $guide>
                    <Dots $w={11} />
                    {n.i === "rcp" ? <Rcp /> : <Plan />}
                    <RowLabel>{n.t}</RowLabel>
                  </TreeRow>
                )
              )}
            </Tree>
            <VScroll>
              <VThumb />
              <ChevronUp size={13} strokeWidth={2.4} />
              <ChevronDown size={13} strokeWidth={2.4} />
            </VScroll>
          </TreeArea>
          <HScroll>
            <HThumb />
            <ChevronRight size={13} strokeWidth={2.4} />
          </HScroll>
        </Side>

        <Main>
          <DocTabs>
            <DocTab $w={128}><SheetIconRaw /> -</DocTab>
            <DocTab $w={80}><SheetIconRaw /> A2.02 -</DocTab>
          </DocTabs>
          <ViewOuter>
            <ViewRow>
              <Drawing />
            </ViewRow>
            <ViewBar>
              <ViewIcon $w={26}><Glasses size={17} strokeWidth={1.1} /></ViewIcon>
              <ViewIcon $w={18} $c="#3a86d8"><Lightbulb size={13} strokeWidth={1.6} /></ViewIcon>
              <ViewIcon $w={0}><ChevronLeft size={13} strokeWidth={2.4} /></ViewIcon>
              <ViewThumb />
              <ViewEnd><ChevronRight size={13} strokeWidth={2.4} /></ViewEnd>
            </ViewBar>
          </ViewOuter>
          <NavWheelBar>
            <NavClose><X size={7} strokeWidth={2} /></NavClose>
            <NavWheel><Search size={13} strokeWidth={1.3} /><Nav2D>2D</Nav2D></NavWheel>
            <NavCaretBox><MiniCaret /></NavCaretBox>
            <NavSep />
            <NavSquare><NavLens /></NavSquare>
            <NavCaretBox><MiniCaret /></NavCaretBox>
            <NavMenu />
          </NavWheelBar>
        </Main>
      </Workspace>

      <Status>
        <Ready><Shift $x={13}>Ready</Shift></Ready>
        <StatusSlot $w={23}><Key size={15} strokeWidth={1.8} /></StatusSlot>
        <StatusSelect $w={203}>&nbsp;<ChevronDown size={12} strokeWidth={1.3} /></StatusSelect>
        <StatusSlot $w={8} />
        <StatusSlot $w={20}><Key size={15} strokeWidth={2} /></StatusSlot>
        <StatusSlot $w={35}><StatusText>:0</StatusText></StatusSlot>
        <StatusSlot $w={26}><Box size={15} strokeWidth={2.2} /></StatusSlot>
        <StatusSlot $w={25}><Copy size={15} strokeWidth={1.8} /></StatusSlot>
        <StatusSelect $w={203}>Main Model<ChevronDown size={12} strokeWidth={1.3} /></StatusSelect>
        <StatusSlot $w={227} />
        <StatusSlot $w={27}><Key size={17} strokeWidth={2.4} /></StatusSlot>
        <StatusSlot $w={25}><Layers size={17} strokeWidth={2.4} /></StatusSlot>
        <StatusSlot $w={26}><Pin size={17} strokeWidth={2.4} /></StatusSlot>
        <StatusSlot $w={27}><Layers size={17} strokeWidth={2.4} /></StatusSlot>
        <StatusSlot $w={25}><Move size={16} strokeWidth={1.8} /></StatusSlot>
        <StatusSlot $w={23}><Settings size={15} strokeWidth={2} /></StatusSlot>
        <StatusSlot $w={18}><Filter size={17} strokeWidth={1.6} /></StatusSlot>
        <StatusText>:1</StatusText>
      </Status>

      <Dialog>
        <DialogTitle>
          Type Properties
          <X size={16} strokeWidth={1.1} color="#222" />
        </DialogTitle>
        <DialogBody>
          <FormTop>
            <FormCol>
              <FormRow>
                <FormLabel>Family:</FormLabel>
                <ComboBox>Tukahnes 30x42 Horizontal<ChevronDown size={12} strokeWidth={1.2} /></ComboBox>
              </FormRow>
              <FormRow>
                <FormLabel>Type:</FormLabel>
                <ComboBox>E1 30x42 Horizontal<ChevronDown size={12} strokeWidth={1.2} /></ComboBox>
              </FormRow>
            </FormCol>
            <ButtonCol>
              <DlgButton>Load...</DlgButton>
              <DlgButton>Duplicate...</DlgButton>
              <DlgButton>Rename...</DlgButton>
            </ButtonCol>
          </FormTop>
          <SectionLabel>Type Parameters</SectionLabel>
          <Grid>
            <GridHead>
              <HeadCell>Parameter</HeadCell>
              <HeadCell>Value</HeadCell>
              <HeadCell>=</HeadCell>
            </GridHead>
            <GridGap />
            <GroupRow>Other<Collapse /></GroupRow>
            <DataRow>
              <DataName>FloorPlanTitleBlock</DataName>
              <DataValue $sel><CheckBox><Check size={12} strokeWidth={1.8} /></CheckBox></DataValue>
              <Grip />
            </DataRow>
            <DataRow>
              <DataName>NorthArrow</DataName>
              <DataValue><CheckBox><Check size={12} strokeWidth={1.8} /></CheckBox></DataValue>
              <Grip />
            </DataRow>
          </Grid>
          <HelpAnchor>What do these properties do?</HelpAnchor>
          <Footer>
            <DlgButton $w={88}>&lt;&lt; Preview</DlgButton>
            <FooterRight>
              <DlgButton $w={87} $kind="ok">OK</DlgButton>
              <DlgButton $w={88}>Cancel</DlgButton>
              <DlgButton $w={87} $kind="off">Apply</DlgButton>
            </FooterRight>
          </Footer>
        </DialogBody>
        <ResizeGrip />
      </Dialog>
    </Page>
  );
}
